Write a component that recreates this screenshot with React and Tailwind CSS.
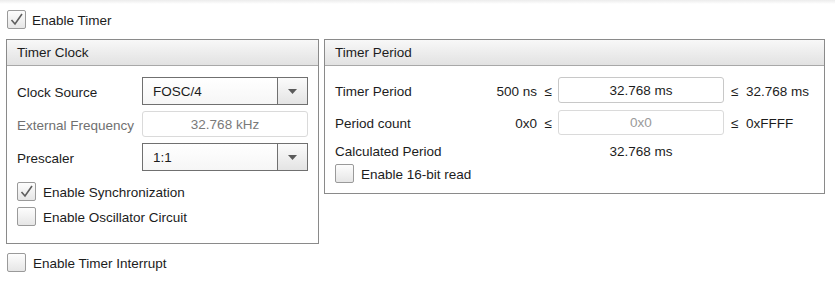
import React from "react";

const font = { fontFamily: '"Liberation Sans", Arial, Helvetica, sans-serif' };

function Check({ checked }) {
  return (
    <div className="w-[19px] h-[19px] shrink-0 rounded-[2px] border border-[#9a9a9a] bg-gradient-to-b from-[#fdfdfd] to-[#e6e6e6] flex items-center justify-center">
      {checked && (
        <svg width="15" height="15" viewBox="0 0 15 15">
          <polyline points="2.5,8 6,12 13,2" fill="none" stroke="#5e5e5e" strokeWidth="1.6" strokeLinejoin="miter" />
        </svg>
      )}
    </div>
  );
}

function CheckRow({ checked, label, gap = "gap-[7px]" }) {
  return (
    <div className={`flex items-center ${gap}`}>
      <Check checked={checked} />
      <span className="text-[13.5px] text-[#1c1c1c] leading-none translate-y-[1px]">{label}</span>
    </div>
  );
}

function Select({ value }) {
  return (
    <div className="w-[166px] h-[28px] border border-[#707070] flex bg-gradient-to-b from-white to-[#f6f6f6]">
      <div className="flex-1 flex items-center pl-[10px] text-[13.5px] text-[#1c1c1c]">
        <span className="translate-y-[1px]">{value}</span>
      </div>
      <div className="w-[30px] border-l border-[#707070] bg-gradient-to-b from-[#fbfbfb] to-[#e4e4e4] flex items-center justify-center">
        <svg width="9" height="5" viewBox="0 0 9 5">
          <polygon points="0,0 9,0 4.5,5" fill="#5a5a5a" />
        </svg>
      </div>
    </div>
  );
}

function Panel({ title, className, children }) {
  return (
    <div className={`border border-[#8a8a8a] flex flex-col ${className}`}>
      <div className="h-[26px] border-b border-[#a8a8a8] bg-gradient-to-b from-[#f8f8f8] to-[#e2e2e2] flex items-center pl-[10px] text-[13.5px] text-[#1c1c1c]">
        <span className="translate-y-[1px]">{title}</span>
      </div>
      {children}
    </div>
  );
}

export default function App() {
  return (
    <div className="w-[835px] h-[285px] bg-white overflow-hidden" style={font}>
      <div className="h-[4px] bg-gradient-to-b from-[#ececec] to-white" />
      <div className="pl-[7px] mt-[6px]">
        <CheckRow checked label="Enable Timer" gap="gap-[6px]" />
      </div>
      <div className="flex items-start mt-[10px] pl-[6px] gap-[5px]">
        <Panel title="Timer Clock" className="w-[313px] h-[205px]">
          <div className="pl-[10px] pt-[11px] flex flex-col">
            <div className="flex items-center h-[28px]">
              <div className="w-[125px] text-[13.5px] text-[#1c1c1c] translate-y-[1.5px]">Clock Source</div>
              <Select value="FOSC/4" />
            </div>
            <div className="flex items-center h-[26px] mt-[6px]">
              <div className="w-[125px] text-[13.5px] text-[#707070] translate-y-[1.5px]">External Frequency</div>
              <div className="w-[166px] h-[26px] border border-[#dadada] rounded-[3px] bg-white flex items-center justify-center text-[13.5px] text-[#7a7a7a]">
                <span className="translate-y-[1px]">32.768 kHz</span>
              </div>
            </div>
            <div className="flex items-center h-[28px] mt-[6px]">
              <div className="w-[125px] text-[13.5px] text-[#1c1c1c] translate-y-[1.5px]">Prescaler</div>
              <Select value="1:1" />
            </div>
            <div className="mt-[11px]">
              <CheckRow checked label="Enable Synchronization" />
            </div>
            <div className="mt-[6px]">
              <CheckRow label="Enable Oscillator Circuit" />
            </div>
          </div>
        </Panel>
        <Panel title="Timer Period" className="w-[501px] h-[155px]">
          <div className="pl-[10px] pt-[11px] flex flex-col">
            <div className="flex items-center h-[26px] text-[13.5px] text-[#1c1c1c]">
              <div className="w-[150px] translate-y-[1.5px]">Timer Period</div>
              <div className="w-[67px] text-right whitespace-pre translate-y-[1.5px]">{"500 ns  ≤"}</div>
              <div className="ml-[6px] w-[166px] h-[26px] border border-[#c8c8c8] rounded-[3px] bg-white flex items-center justify-center">
                <span className="translate-y-[1px]">32.768 ms</span>
              </div>
              <div className="ml-[7px] whitespace-pre translate-y-[1.5px]">{"≤  32.768 ms"}</div>
            </div>
            <div className="flex items-center h-[25px] mt-[7px] text-[13.5px] text-[#1c1c1c]">
              <div className="w-[150px] translate-y-[1.5px]">Period count</div>
              <div className="w-[67px] text-right whitespace-pre translate-y-[1.5px]">{"0x0  ≤"}</div>
              <div className="ml-[6px] w-[166px] h-[25px] border border-[#dadada] rounded-[3px] bg-white flex items-center justify-center text-[#9a9a9a]">
                <span className="translate-y-[1px]">0x0</span>
              </div>
              <div className="ml-[7px] whitespace-pre translate-y-[1.5px]">{"≤  0xFFFF"}</div>
            </div>
            <div className="flex items-center h-[20px] mt-[5px] text-[13.5px] text-[#1c1c1c]">
              <div className="w-[150px] translate-y-[1.5px]">Calculated Period</div>
              <div className="w-[67px]" />
              <div className="ml-[6px] w-[166px] text-center translate-y-[1.5px]">32.768 ms</div>
            </div>
            <div className="mt-[4px]">
              <CheckRow label="Enable 16-bit read" />
            </div>
          </div>
        </Panel>
      </div>
      <div className="pl-[7px] mt-[9px]">
        <CheckRow label="Enable Timer Interrupt" />
      </div>
    </div>
  );
}
